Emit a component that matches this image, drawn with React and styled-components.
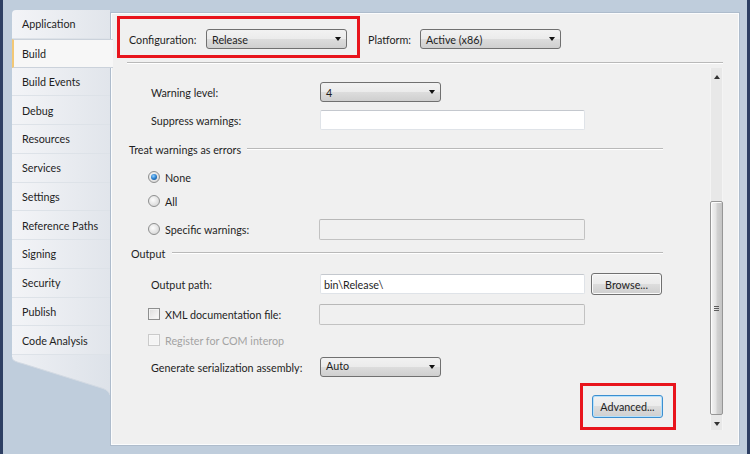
import React from 'react';
import styled, { createGlobalStyle, css } from 'styled-components';

const GlobalStyle = createGlobalStyle`
  html, body { margin: 0; padding: 0; }
  body {
    font-family: Lato, "Noto Sans", sans-serif;
    font-size: 10.75px;
    color: #1e1e1e;
  }
  #root { width: 750px; height: 454px; overflow: hidden; }
`;

const tabs = ['Application', 'Build', 'Build Events', 'Debug', 'Resources', 'Services', 'Settings', 'Reference Paths', 'Signing', 'Security', 'Publish', 'Code Analysis'];

const Frame = styled.div`
  box-sizing: border-box;
  width: 750px;
  height: 454px;
  display: flex;
  align-items: flex-start;
  background: #bfcddc;
  border-left: 3px solid #2d3f63;
  border-right: 3px solid #2d3f63;
`;

const Sidebar = styled.div`
  margin: 10px 0 0 9px;
  width: 98px;
  display: flex;
  flex-direction: column;
`;

const TabList = styled.div`
  display: flex;
  flex-direction: column;
  border-radius: 4px 0 0 0;
  background: linear-gradient(to right, #f3f4f7, #e1e5eb);
`;

const Tab = styled.div`
  height: 28.75px;
  box-sizing: border-box;
  display: flex;
  align-items: center;
  padding-left: 10px;
  border-bottom: 1px solid #dde2e8;
  white-space: nowrap;
  &:first-child { border-radius: 4px 0 0 0; }
  ${p => p.$active && css`
    background: #f7f7f7;
    margin-right: -3px;
    position: relative;
    z-index: 1;
    border-left: 2px solid #f3c875;
    padding-left: 8px;
    border-top: 1px solid #cbd2db;
    border-bottom: 1px solid #cbd2db;
  `}
`;

const Panel = styled.div`
  margin-top: 12px;
  width: 630px;
  height: 434px;
  box-sizing: border-box;
  background: #f0f0f0;
  border: 1px solid #aebccc;
  box-shadow: inset 0 0 0 1px #fbfcfd;
  display: flex;
  flex-direction: column;
`;

const Header = styled.div`
  display: flex;
  align-items: center;
  padding: 3px 0 4px 6px;
`;

const Highlight = styled.div`
  border: 3px solid #e8141c;
  display: flex;
  align-items: center;
  padding: ${p => p.$pad};
`;

const PlatformGroup = styled.div`
  display: flex;
  align-items: center;
  margin: 4px 0 0 8px;
`;

const Label = styled.span`
  display: inline-block;
  width: ${p => (p.$w ? `${p.$w}px` : 'auto')};
  white-space: nowrap;
`;

const Combo = styled.div`
  box-sizing: border-box;
  width: ${p => p.$w}px;
  height: 20px;
  border: 1px solid #707070;
  border-radius: 3px;
  background: linear-gradient(#f2f2f2 0%, #ebebeb 50%, #dddddd 50%, #cfcfcf 100%);
  display: flex;
  align-items: ${p => (p.$top ? 'flex-start' : 'center')};
  justify-content: space-between;
  padding-left: 5px;
  span { line-height: ${p => (p.$top ? '15px' : 'normal')}; }
  &::after {
    content: '';
    align-self: center;
    margin-right: 5px;
    border-left: 3.5px solid transparent;
    border-right: 3.5px solid transparent;
    border-top: 4px solid #111;
  }
`;

const Etch = styled.div`
  height: 0;
  border-top: 1px solid #b9b9b9;
  border-bottom: 1px solid #ffffff;
  margin: ${p => p.$m};
  flex: ${p => (p.$grow ? 1 : 'none')};
`;

const Body = styled.div`
  flex: 1;
  display: flex;
  min-height: 0;
`;

const Content = styled.div`
  flex: 1;
  display: flex;
  flex-direction: column;
  padding: 16px 47px 0 0;
`;

const Row = styled.div`
  height: 24px;
  margin-top: ${p => p.$mt || 0}px;
  display: flex;
  align-items: center;
  flex: none;
`;

const LabelCell = styled.div`
  box-sizing: border-box;
  width: 209px;
  padding-left: ${p => p.$pl}px;
  display: flex;
  align-items: center;
  white-space: nowrap;
  color: ${p => (p.$disabled ? '#a3a3a3' : '#1e1e1e')};
`;

const GroupHead = styled.div`
  height: 24px;
  margin-top: ${p => p.$mt || 0}px;
  padding-left: ${p => p.$pl}px;
  display: flex;
  align-items: center;
  gap: ${p => p.$gap}px;
`;

const TextBox = styled.div`
  box-sizing: border-box;
  width: ${p => (p.$disabled ? 266 : 265)}px;
  height: ${p => (p.$disabled ? 21 : 20)}px;
  display: flex;
  align-items: center;
  padding-left: 3px;
  background: ${p => (p.$disabled ? '#f0f0f0' : '#ffffff')};
  border: 1px solid ${p => (p.$disabled ? '#c2c2c2' : '#dfe3e8')};
  border-top-color: ${p => (p.$disabled ? '#b8b8b8' : '#c4c8ce')};
  border-radius: 2px;
  margin-left: ${p => (p.$disabled ? -1 : 0)}px;
`;

const Button = styled.div`
  box-sizing: border-box;
  width: 71px;
  height: ${p => (p.$focus ? 23 : 22)}px;
  margin-left: ${p => p.$ml || 0}px;
  display: flex;
  align-items: center;
  justify-content: center;
  border: 1px solid ${p => (p.$focus ? '#3c8fd0' : '#707070')};
  border-radius: 3px;
  background: linear-gradient(#f2f2f2 0%, #ebebeb 50%, #dddddd 50%, #cfcfcf 100%);
  box-shadow: inset 0 0 0 1px ${p => (p.$focus ? '#b6e1fb' : '#fafafa')};
`;

const Radio = styled.span`
  box-sizing: border-box;
  width: 12px;
  height: 12px;
  margin-right: 5px;
  border-radius: 50%;
  border: 1px solid #8e8f8f;
  background: radial-gradient(circle at 40% 40%, #fdfdfd 0%, #dcdcdc 70%, #cfcfcf 100%);
  display: flex;
  align-items: center;
  justify-content: center;
  ${p => p.$checked && css`
    &::after {
      content: '';
      width: 6px;
      height: 6px;
      border-radius: 50%;
      background: radial-gradient(circle at 40% 35%, #8fd0ff 0%, #2a7fce 50%, #0b3f7a 100%);
    }
  `}
`;

const Check = styled.span`
  box-sizing: border-box;
  width: 12px;
  height: 12px;
  margin-right: 5px;
  border: 1px solid ${p => (p.$disabled ? '#cacaca' : '#8e8f8f')};
  background: ${p => (p.$disabled ? '#f4f4f4' : 'linear-gradient(135deg, #dcdcdc, #fbfbfb)')};
  box-shadow: inset 0 0 0 1px ${p => (p.$disabled ? '#f7f7f7' : '#f2f2f2')};
`;

const AdvancedRow = styled.div`
  display: flex;
  justify-content: flex-end;
  margin: 4px -13px 0 0;
`;

const ScrollBar = styled.div`
  width: 13px;
  margin: 4px 16px 15px 0;
  display: flex;
  flex-direction: column;
  background: #e8e8e8;
  box-shadow: inset 1px 0 0 #f4f4f4, inset -1px 0 0 #f4f4f4;
`;

const ArrowBox = styled.div`
  height: ${p => p.$h}px;
  display: flex;
  align-items: center;
  justify-content: center;
  &::after {
    content: '';
    border-left: 3.5px solid transparent;
    border-right: 3.5px solid transparent;
    ${p => (p.$up ? 'border-bottom: 4px solid #333;' : 'border-top: 4px solid #333;')}
  }
`;

const Track = styled.div`
  flex: 1;
  display: flex;
  flex-direction: column;
  padding: 116px 0 2px;
`;

const Thumb = styled.div`
  flex: 1;
  box-sizing: border-box;
  border: 1px solid #969696;
  border-radius: 2px;
  background: linear-gradient(to right, #f4f4f4 0%, #e4e4e4 45%, #d2d2d2 55%, #c4c4c4 100%);
  box-shadow: inset 1px 1px 0 #fcfcfc;
  display: flex;
  align-items: center;
  justify-content: center;
`;

const Grip = styled.div`
  width: 5px;
  height: 5px;
  background: repeating-linear-gradient(#5d5d5d 0 1px, transparent 1px 2px);
`;

function Flap() {
  return (
    <svg width="98" height="40" viewBox="0 0 98 40" style={{ display: 'block' }}>
      <defs>
        <linearGradient id="flapg" x1="0" x2="1" y1="0" y2="0">
          <stop offset="0" stopColor="#eef0f4" />
          <stop offset="1" stopColor="#dde2e9" />
        </linearGradient>
      </defs>
      <path d="M0 0 H98 V40 C97 37 95 35 91 33.5 L12 9 C5 7 0 6 0 2 Z" fill="url(#flapg)" />
      <path d="M98 40 C97 37 95 35 91 33.5 L12 9 C5 7 0 6 0 2" fill="none" stroke="#d3dae3" />
    </svg>
  );
}

export default function App() {
  return (
    <>
      <GlobalStyle />
      <Frame>
        <Sidebar>
          <TabList>
            {tabs.map(t => (
              <Tab key={t} $active={t === 'Build'}>{t}</Tab>
            ))}
          </TabList>
          <Flap />
        </Sidebar>
        <Panel>
          <Header>
            <Highlight $pad="10px 10px 6px 9px">
              <Label $w={77}>Configuration:</Label>
              <Combo $w={141}><span>Release</span></Combo>
            </Highlight>
            <PlatformGroup>
              <Label $w={52}>Platform:</Label>
              <Combo $w={141}><span>Active (x86)</span></Combo>
            </PlatformGroup>
          </Header>
          <Etch $m="0 16px 0 16px" />
          <Body>
            <Content>
              <Row>
                <LabelCell $pl={40}>Warning level:</LabelCell>
                <Combo $w={121}><span>4</span></Combo>
              </Row>
              <Row $mt={4}>
                <LabelCell $pl={40}>Suppress warnings:</LabelCell>
                <TextBox />
              </Row>
              <GroupHead $mt={5} $pl={18} $gap={6}>
                <span>Treat warnings as errors</span>
                <Etch $grow $m="0" />
              </GroupHead>
              <Row $mt={4}>
                <LabelCell $pl={37}><Radio $checked />None</LabelCell>
              </Row>
              <Row>
                <LabelCell $pl={37}><Radio />All</LabelCell>
              </Row>
              <Row $mt={4}>
                <LabelCell $pl={37}><Radio />Specific warnings:</LabelCell>
                <TextBox $disabled />
              </Row>
              <GroupHead $pl={20} $gap={7}>
                <span>Output</span>
                <Etch $grow $m="0" />
              </GroupHead>
              <Row $mt={7}>
                <LabelCell $pl={40}>Output path:</LabelCell>
                <TextBox>bin\Release\</TextBox>
                <Button $ml={6}>Browse...</Button>
              </Row>
              <Row $mt={6}>
                <LabelCell $pl={37}><Check />XML documentation file:</LabelCell>
                <TextBox $disabled />
              </Row>
              <Row $mt={2}>
                <LabelCell $pl={37} $disabled><Check $disabled />Register for COM interop</LabelCell>
              </Row>
              <Row $mt={3}>
                <LabelCell $pl={40}>Generate serialization assembly:</LabelCell>
                <Combo $w={121} $top><span>Auto</span></Combo>
              </Row>
              <AdvancedRow>
                <Highlight $pad="9px 10px 9px 9px">
                  <Button $focus>Advanced...</Button>
                </Highlight>
              </AdvancedRow>
            </Content>
            <ScrollBar>
              <ArrowBox $up $h={17} />
              <Track>
                <Thumb><Grip /></Thumb>
              </Track>
              <ArrowBox $h={13} />
            </ScrollBar>
          </Body>
        </Panel>
      </Frame>
    </>
  );
}
